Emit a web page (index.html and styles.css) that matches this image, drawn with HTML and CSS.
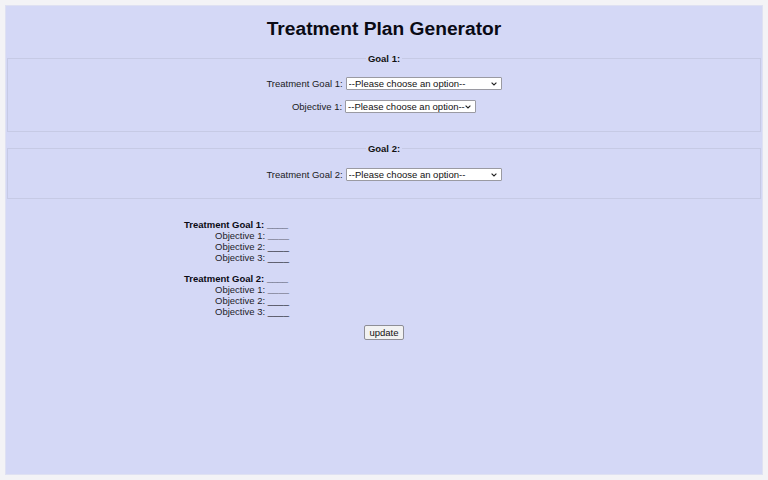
FILE: index.html
```html
<!DOCTYPE html>
<html lang="en">
<head>
<meta charset="utf-8">
<title>Treatment Plan Generator</title>
<link rel="stylesheet" href="styles.css">
</head>
<body>
<div class="app">
  <h1 class="title">Treatment Plan Generator</h1>

  <fieldset class="goal">
    <legend class="goal-legend">Goal 1:</legend>
    <div class="row">
      <label class="row-label" for="g1">Treatment Goal 1:</label>
      <select id="g1" class="picker picker-goal"><option>--Please choose an option--</option></select>
    </div>
    <div class="row">
      <label class="row-label" for="o1">Objective 1:</label>
      <select id="o1" class="picker picker-obj"><option>--Please choose an option--</option></select>
    </div>
  </fieldset>

  <fieldset class="goal goal-second">
    <legend class="goal-legend">Goal 2:</legend>
    <div class="row">
      <label class="row-label" for="g2">Treatment Goal 2:</label>
      <select id="g2" class="picker picker-goal"><option>--Please choose an option--</option></select>
    </div>
  </fieldset>

  <div class="summary">
    <div class="sum-goal">Treatment Goal 1: ____</div>
    <div class="sum-obj">Objective 1: <b>____</b></div>
    <div class="sum-obj">Objective 2: ____</div>
    <div class="sum-obj">Objective 3: ____</div>
    <div class="sum-gap"></div>
    <div class="sum-goal">Treatment Goal 2: ____</div>
    <div class="sum-obj">Objective 1: <b>____</b></div>
    <div class="sum-obj">Objective 2: ____</div>
    <div class="sum-obj">Objective 3: ____</div>
  </div>

  <div class="actions">
    <button class="btn" type="button">update</button>
  </div>
</div>
</body>
</html>
```

FILE: styles.css
```css
html, body {
  height: 100%;
}
body {
  margin: 5px;
  background: #f3f3f6;
  font-family: "Liberation Sans", Arial, sans-serif;
  font-size: 9.5px;
  color: #111;
}
.app {
  box-sizing: border-box;
  height: 470px;
  background: #d4d8f6;
  border: 1px solid #dfe1f2;
  overflow: hidden;
}
.title {
  margin: 12px 0 13px;
  font-size: 19.2px;
  line-height: 22px;
  font-weight: bold;
  text-align: center;
  color: #0a0a14;
}
.goal {
  margin: 0 1px;
  padding: 3px 7px 8px;
  border: 1px solid #c6cae5;
}
.goal-second {
  margin-top: 11px;
  padding-bottom: 7px;
}
.goal-legend {
  margin: 0 auto;
  padding: 0 2px;
  font-weight: bold;
  line-height: 11px;
}
.row {
  display: flex;
  justify-content: center;
  align-items: center;
  gap: 3px;
  margin: 10px 0;
  height: 13px;
}
.goal-second .row {
  margin-top: 11px;
}
.row-label {
  color: #1a1a22;
}
.picker {
  -webkit-appearance: none;
  appearance: none;
  box-sizing: border-box;
  height: 13px;
  padding: 0 10px 0 2px;
  font-family: "Liberation Sans", Arial, sans-serif;
  font-size: 9.5px;
  line-height: 11px;
  color: #111;
  background: #fff url("data:image/svg+xml,%3Csvg xmlns='http://www.w3.org/2000/svg' width='6' height='4' viewBox='0 0 6 4'%3E%3Cpath d='M0.6 0.6 L3 3 L5.4 0.6' fill='none' stroke='%23222' stroke-width='1.1'/%3E%3C/svg%3E") no-repeat right 4px center;
  border: 1px solid #9a9aa2;
  border-radius: 1px;
}
.picker-goal {
  width: 156px;
}
.picker-obj {
  width: 131px;
}
.summary {
  width: 400px;
  margin: 20px auto 0;
  line-height: 11px;
}
.sum-goal {
  font-weight: bold;
  color: #0a0a14;
}
.sum-obj {
  padding-left: 31px;
  color: #22222a;
}
.sum-obj b {
  font-weight: bold;
}
.sum-gap {
  height: 10px;
}
.actions {
  display: flex;
  justify-content: center;
  margin-top: 8px;
}
.btn {
  box-sizing: border-box;
  height: 15px;
  padding: 0 4px;
  font-family: "Liberation Sans", Arial, sans-serif;
  font-size: 9.5px;
  line-height: 13px;
  color: #111;
  background: #f2f2f2;
  border: 1px solid #8e8e96;
  border-radius: 2px;
}
```
